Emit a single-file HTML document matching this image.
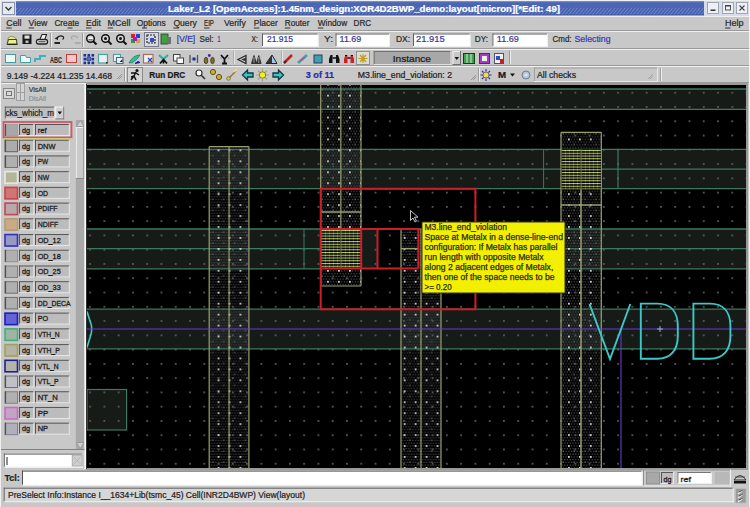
<!DOCTYPE html><html><head><meta charset="utf-8"><style>html,body{margin:0;padding:0;width:750px;height:507px;overflow:hidden;background:#c8c8c8}svg{display:block}text{font-family:"Liberation Sans",sans-serif;white-space:pre}</style></head><body>
<svg width="750" height="507" viewBox="0 0 750 507">
<defs>
<pattern id="hatch" patternUnits="userSpaceOnUse" width="2.6" height="6" patternTransform="rotate(40)"><rect width="2.6" height="6" fill="#4560b0"/><rect width="0.9" height="6" fill="#7088c8"/></pattern>
<pattern id="dots" patternUnits="userSpaceOnUse" x="89.2" y="91.8" width="14.27" height="14.27"><rect x="0" y="0" width="1.8" height="1.8" fill="#585858"/></pattern>
<pattern id="stg" patternUnits="userSpaceOnUse" x="217.6" y="116.6" width="10.95" height="10.95"><rect x="1.67" y="3.04" width="1.2" height="1.2" fill="#4e4e52"/><rect x="0.30" y="5.77" width="1.2" height="1.2" fill="#4e4e52"/><rect x="1.67" y="8.51" width="1.2" height="1.2" fill="#4e4e52"/><rect x="3.04" y="0.30" width="1.2" height="1.2" fill="#4e4e52"/><rect x="4.41" y="3.04" width="1.2" height="1.2" fill="#4e4e52"/><rect x="3.04" y="5.77" width="1.2" height="1.2" fill="#4e4e52"/><rect x="4.41" y="8.51" width="1.2" height="1.2" fill="#4e4e52"/><rect x="5.77" y="0.30" width="1.2" height="1.2" fill="#4e4e52"/><rect x="7.14" y="3.04" width="1.2" height="1.2" fill="#4e4e52"/><rect x="5.77" y="5.77" width="1.2" height="1.2" fill="#4e4e52"/><rect x="7.14" y="8.51" width="1.2" height="1.2" fill="#4e4e52"/><rect x="8.51" y="0.30" width="1.2" height="1.2" fill="#4e4e52"/><rect x="9.88" y="3.04" width="1.2" height="1.2" fill="#4e4e52"/><rect x="8.51" y="5.77" width="1.2" height="1.2" fill="#4e4e52"/><rect x="9.88" y="8.51" width="1.2" height="1.2" fill="#4e4e52"/><rect x="0" y="0" width="1.8" height="1.8" fill="#d8d8d8"/><rect x="5.475" y="5.475" width="1.3" height="1.3" fill="#6a6a6a"/></pattern>
<pattern id="hl" patternUnits="userSpaceOnUse" x="321" y="230" width="4" height="2.75"><rect x="0" y="0" width="4" height="1.1" fill="#b0c068"/><rect x="0" y="0" width="1" height="2.75" fill="#20261a"/><rect x="0" y="0" width="1" height="1.1" fill="#d0e090"/></pattern><pattern id="hl2" patternUnits="userSpaceOnUse" x="561" y="150" width="4" height="2.75"><rect x="0" y="0" width="4" height="1.1" fill="#b0c068"/><rect x="0" y="0" width="1" height="2.75" fill="#20261a"/><rect x="0" y="0" width="1" height="1.1" fill="#d0e090"/></pattern>
<clipPath id="cv"><rect x="87" y="85" width="659" height="383"/></clipPath>
</defs>
<rect x="0" y="0" width="750" height="507" fill="#c8c8c8" stroke="none" stroke-width="1" />
<line x1="0" y1="0.5" x2="750" y2="0.5" stroke="#f0f0f0" stroke-width="1" />
<line x1="0.5" y1="0" x2="0.5" y2="507" stroke="#f0f0f0" stroke-width="1" />
<line x1="749.5" y1="0" x2="749.5" y2="507" stroke="#f4f4f4" stroke-width="1" />
<rect x="1" y="1" width="748" height="15" fill="#d8dce8" stroke="none" stroke-width="1" />
<rect x="16" y="1.5" width="688" height="13.5" fill="url(#hatch)" stroke="none" stroke-width="1" />
<rect x="16" y="1.5" width="688" height="6.5" fill="#4a64b4" stroke="none" stroke-width="1" opacity="0.8"/>
<line x1="16" y1="1.8" x2="704" y2="1.8" stroke="#7890cc" stroke-width="0.6" />
<line x1="16" y1="15" x2="704" y2="15" stroke="#3a4e90" stroke-width="0.8" />
<rect x="2.5" y="2.5" width="12" height="12" fill="#e6e9f0" stroke="#8890aa" stroke-width="1" />
<path d="M5.5 7 L8.5 10 L11.5 7" fill="none" stroke="#333" stroke-width="1.3"/>
<text x="168" y="12" font-size="9.4" font-weight="bold" fill="#ffffff" textLength="392.0" lengthAdjust="spacingAndGlyphs" stroke="#ffffff" stroke-width="0.22">Laker_L2 [OpenAccess]:1.45nm_design:XOR4D2BWP_demo:layout[micron][*Edit: 49]</text>
<rect x="707.5" y="2.5" width="11" height="11" fill="#eef0f5" stroke="#a0a6b8" stroke-width="1" />
<rect x="722.5" y="2.5" width="11" height="11" fill="#eef0f5" stroke="#a0a6b8" stroke-width="1" />
<rect x="736.5" y="2.5" width="11" height="11" fill="#eef0f5" stroke="#a0a6b8" stroke-width="1" />
<rect x="710.5" y="9.5" width="5" height="1.5" fill="#333" stroke="none" stroke-width="1" />
<rect x="725.5" y="5.5" width="5" height="4.5" fill="none" stroke="#444" stroke-width="0.9" />
<rect x="725" y="5" width="6" height="1.5" fill="#444" stroke="none" stroke-width="1" />
<path d="M739.5 5.5 L744.5 10.5 M744.5 5.5 L739.5 10.5" stroke="#444" stroke-width="1.1"/>
<line x1="1" y1="16.5" x2="749" y2="16.5" stroke="#f0f0f0" stroke-width="1" />
<line x1="1" y1="30.5" x2="749" y2="30.5" stroke="#9a9a9a" stroke-width="1" />
<text x="6.3" y="25.8" font-size="8.6" font-weight="normal" fill="#2a2a2a" textLength="15.2" lengthAdjust="spacingAndGlyphs" stroke="#2a2a2a" stroke-width="0.22">Cell</text>
<line x1="6.3" y1="28" x2="11.8" y2="28" stroke="#333" stroke-width="1" />
<text x="28.6" y="25.8" font-size="8.6" font-weight="normal" fill="#2a2a2a" textLength="18.7" lengthAdjust="spacingAndGlyphs" stroke="#2a2a2a" stroke-width="0.22">View</text>
<line x1="28.6" y1="28" x2="34.1" y2="28" stroke="#333" stroke-width="1" />
<text x="54.4" y="25.8" font-size="8.6" font-weight="normal" fill="#2a2a2a" textLength="24.8" lengthAdjust="spacingAndGlyphs" stroke="#2a2a2a" stroke-width="0.22">Create</text>
<line x1="67.5" y1="28" x2="72.5" y2="28" stroke="#333" stroke-width="1" />
<text x="86" y="25.8" font-size="8.6" font-weight="normal" fill="#2a2a2a" textLength="14.8" lengthAdjust="spacingAndGlyphs" stroke="#2a2a2a" stroke-width="0.22">Edit</text>
<line x1="86" y1="28" x2="91.5" y2="28" stroke="#333" stroke-width="1" />
<text x="107.6" y="25.8" font-size="8.6" font-weight="normal" fill="#2a2a2a" textLength="22.8" lengthAdjust="spacingAndGlyphs" stroke="#2a2a2a" stroke-width="0.22">MCell</text>
<line x1="107.6" y1="28" x2="113.1" y2="28" stroke="#333" stroke-width="1" />
<text x="136.7" y="25.8" font-size="8.6" font-weight="normal" fill="#2a2a2a" textLength="29.1" lengthAdjust="spacingAndGlyphs" stroke="#2a2a2a" stroke-width="0.22">Options</text>
<line x1="142" y1="28" x2="147" y2="28" stroke="#333" stroke-width="1" />
<text x="173.4" y="25.8" font-size="8.6" font-weight="normal" fill="#2a2a2a" textLength="23.4" lengthAdjust="spacingAndGlyphs" stroke="#2a2a2a" stroke-width="0.22">Query</text>
<line x1="173.4" y1="28" x2="178.9" y2="28" stroke="#333" stroke-width="1" />
<text x="204" y="25.8" font-size="8.6" font-weight="normal" fill="#2a2a2a" textLength="10.0" lengthAdjust="spacingAndGlyphs" stroke="#2a2a2a" stroke-width="0.22">EIP</text>
<line x1="204" y1="28" x2="209.5" y2="28" stroke="#333" stroke-width="1" />
<text x="224" y="25.8" font-size="8.6" font-weight="normal" fill="#2a2a2a" textLength="21.8" lengthAdjust="spacingAndGlyphs" stroke="#2a2a2a" stroke-width="0.22">Verify</text>
<text x="253.8" y="25.8" font-size="8.6" font-weight="normal" fill="#2a2a2a" textLength="24.0" lengthAdjust="spacingAndGlyphs" stroke="#2a2a2a" stroke-width="0.22">Placer</text>
<line x1="253.8" y1="28" x2="259.3" y2="28" stroke="#333" stroke-width="1" />
<text x="284.8" y="25.8" font-size="8.6" font-weight="normal" fill="#2a2a2a" textLength="24.6" lengthAdjust="spacingAndGlyphs" stroke="#2a2a2a" stroke-width="0.22">Router</text>
<line x1="284.8" y1="28" x2="290.3" y2="28" stroke="#333" stroke-width="1" />
<text x="317.8" y="25.8" font-size="8.6" font-weight="normal" fill="#2a2a2a" textLength="29.4" lengthAdjust="spacingAndGlyphs" stroke="#2a2a2a" stroke-width="0.22">Window</text>
<line x1="317.8" y1="28" x2="323.3" y2="28" stroke="#333" stroke-width="1" />
<text x="353.6" y="25.8" font-size="8.6" font-weight="normal" fill="#2a2a2a" textLength="17.6" lengthAdjust="spacingAndGlyphs" stroke="#2a2a2a" stroke-width="0.22">DRC</text>
<text x="725" y="25.8" font-size="8.6" font-weight="normal" fill="#2a2a2a" textLength="18.5" lengthAdjust="spacingAndGlyphs" stroke="#2a2a2a" stroke-width="0.22">Help</text>
<line x1="725" y1="28" x2="730.5" y2="28" stroke="#333" stroke-width="1" />
<line x1="1" y1="31.5" x2="749" y2="31.5" stroke="#f0f0f0" stroke-width="1" />
<line x1="1" y1="48.5" x2="749" y2="48.5" stroke="#9a9a9a" stroke-width="1" />
<line x1="1" y1="49.5" x2="749" y2="49.5" stroke="#f0f0f0" stroke-width="1" />
<line x1="1" y1="65.5" x2="749" y2="65.5" stroke="#9a9a9a" stroke-width="1" />
<line x1="1" y1="66.5" x2="749" y2="66.5" stroke="#f0f0f0" stroke-width="1" />
<line x1="1" y1="82.5" x2="749" y2="82.5" stroke="#9a9a9a" stroke-width="1" />
<path d="M8 38 q3 -3 6 -1 l2 1.5 v5.5 h-8 z" fill="#e4ec90" stroke="#606030" stroke-width="0.6"/>
<path d="M7 44.5 l1.5 -5 h8 l0.5 5 z" fill="#e8f090" stroke="#303010" stroke-width="0.9"/><path d="M8 44.2 h9.5" stroke="#202010" stroke-width="1.2"/>
<rect x="22.5" y="34.5" width="9" height="9.5" fill="#1a1a1a" stroke="none" stroke-width="1" />
<rect x="24.5" y="35.5" width="5" height="3.2" fill="#e0e0e0" stroke="none" stroke-width="1" />
<rect x="25.5" y="40.5" width="3" height="2.5" fill="#c0c0c0" stroke="none" stroke-width="1" />
<path d="M40 39 l2 -4.5 h4.5 l-1.5 4.5" fill="#f0f0f0" stroke="#222" stroke-width="1.1"/><rect x="36.5" y="39.5" width="11" height="4.5" rx="2" fill="#e8e8e8" stroke="#222" stroke-width="1.3"/><path d="M38.5 41.8 h7" stroke="#222" stroke-width="0.9"/>
<line x1="50.5" y1="33" x2="50.5" y2="47" stroke="#999" stroke-width="1" />
<line x1="51.5" y1="33" x2="51.5" y2="47" stroke="#eee" stroke-width="1" />
<path d="M57 38 q3 -3.5 6 -1.5 q1.5 1.5 -0.5 3" fill="none" stroke="#222" stroke-width="1.2"/><path d="M54.5 38.5 l3.5 -2 v3.5 z" fill="#222"/><path d="M54.5 43 h5.5" stroke="#111" stroke-width="1.8"/>
<path d="M78 38 q-3 -3.5 -6 -1.5 q-1.5 1.5 0.5 3" fill="none" stroke="#a8a8a8" stroke-width="1.2"/><path d="M75 43 h5.5" stroke="#a8a8a8" stroke-width="1.8"/>
<line x1="82.5" y1="33" x2="82.5" y2="47" stroke="#999" stroke-width="1" />
<line x1="83.5" y1="33" x2="83.5" y2="47" stroke="#eee" stroke-width="1" />
<circle cx="90.5" cy="38.5" r="3.8" fill="#d8d8d8" stroke="#111" stroke-width="1.5"/><path d="M93 41 l3.5 3.5" stroke="#111" stroke-width="2"/>
<path d="M88.5 38.5 h4" stroke="#fff" stroke-width="1.6"/><path d="M88.5 39.8 h4" stroke="#222" stroke-width="0.8"/>
<circle cx="105.5" cy="38.5" r="3.8" fill="#d8d8d8" stroke="#111" stroke-width="1.5"/><path d="M108 41 l3.5 3.5" stroke="#111" stroke-width="2"/>
<circle cx="105.5" cy="38.5" r="1.5" fill="#111"/>
<circle cx="120.5" cy="38.5" r="3.8" fill="#d8d8d8" stroke="#111" stroke-width="1.5"/><path d="M123 41 l3.5 3.5" stroke="#111" stroke-width="2"/>
<circle cx="120.5" cy="38.5" r="1.5" fill="#111"/>
<rect x="131" y="34" width="4" height="4" fill="#e02020" stroke="none" stroke-width="1" />
<rect x="136" y="34" width="4" height="4" fill="#2040e0" stroke="none" stroke-width="1" />
<rect x="131" y="39" width="4" height="4" fill="#20a040" stroke="none" stroke-width="1" />
<rect x="136" y="39" width="4" height="4" fill="#e0a020" stroke="none" stroke-width="1" />
<rect x="133" y="37" width="4" height="4" fill="#a020c0" stroke="none" stroke-width="1" />
<rect x="144.5" y="32.5" width="14" height="14" fill="#d8d8e0" stroke="#7a7a8a" stroke-width="1" />
<path d="M147 35 h8 v8 h-8 z" fill="none" stroke="#202040" stroke-width="1.2" stroke-dasharray="2 1"/>
<rect x="150" y="38" width="4" height="4" fill="#3050c0" stroke="none" stroke-width="1" />
<rect x="161" y="34" width="7" height="10" fill="#40a040" stroke="#204020" stroke-width="0.8" />
<rect x="167" y="37" width="4" height="7" fill="#707070" stroke="none" stroke-width="1" />
<text x="176.8" y="42" font-size="8.8" font-weight="normal" fill="#3434a8" textLength="18.4" lengthAdjust="spacingAndGlyphs" stroke="#3434a8" stroke-width="0.22">[V/E]</text>
<text x="199.6" y="42" font-size="8.8" font-weight="normal" fill="#2a2a2a" textLength="14.0" lengthAdjust="spacingAndGlyphs" stroke="#2a2a2a" stroke-width="0.22">Sel:</text>
<text x="217.5" y="42" font-size="8.8" font-weight="normal" fill="#3434a8" textLength="3.0" lengthAdjust="spacingAndGlyphs" stroke="#3434a8" stroke-width="0.22">1</text>
<text x="251.4" y="42.2" font-size="8.6" font-weight="normal" fill="#2a2a2a" textLength="6.4" lengthAdjust="spacingAndGlyphs" stroke="#2a2a2a" stroke-width="0.22">X:</text>
<rect x="262" y="33.5" width="56.5" height="13.5" fill="#ffffff" stroke="none" stroke-width="1" />
<line x1="262" y1="34.0" x2="318.5" y2="34.0" stroke="#606060" stroke-width="1" />
<line x1="262.5" y1="33.5" x2="262.5" y2="47.0" stroke="#606060" stroke-width="1" />
<line x1="262" y1="46.5" x2="318.5" y2="46.5" stroke="#f0f0f0" stroke-width="1" />
<line x1="318.0" y1="33.5" x2="318.0" y2="47.0" stroke="#f0f0f0" stroke-width="1" />
<text x="266.9" y="42.4" font-size="8.6" font-weight="normal" fill="#3a3a96" textLength="26.1" lengthAdjust="spacingAndGlyphs" stroke="#3a3a96" stroke-width="0.22">21.915</text>
<text x="324" y="42.2" font-size="8.6" font-weight="normal" fill="#2a2a2a" textLength="9.0" lengthAdjust="spacingAndGlyphs" stroke="#2a2a2a" stroke-width="0.22">Y:</text>
<rect x="335.5" y="33.5" width="54.5" height="13.5" fill="#ffffff" stroke="none" stroke-width="1" />
<line x1="335.5" y1="34.0" x2="390.0" y2="34.0" stroke="#606060" stroke-width="1" />
<line x1="336.0" y1="33.5" x2="336.0" y2="47.0" stroke="#606060" stroke-width="1" />
<line x1="335.5" y1="46.5" x2="390.0" y2="46.5" stroke="#f0f0f0" stroke-width="1" />
<line x1="389.5" y1="33.5" x2="389.5" y2="47.0" stroke="#f0f0f0" stroke-width="1" />
<text x="339.6" y="42.4" font-size="8.6" font-weight="normal" fill="#3a3a96" textLength="21.6" lengthAdjust="spacingAndGlyphs" stroke="#3a3a96" stroke-width="0.22">11.69</text>
<text x="396" y="42.2" font-size="8.6" font-weight="normal" fill="#2a2a2a" textLength="14.0" lengthAdjust="spacingAndGlyphs" stroke="#2a2a2a" stroke-width="0.22">DX:</text>
<rect x="413" y="33.5" width="57.5" height="13.5" fill="#ffffff" stroke="none" stroke-width="1" />
<line x1="413" y1="34.0" x2="470.5" y2="34.0" stroke="#606060" stroke-width="1" />
<line x1="413.5" y1="33.5" x2="413.5" y2="47.0" stroke="#606060" stroke-width="1" />
<line x1="413" y1="46.5" x2="470.5" y2="46.5" stroke="#f0f0f0" stroke-width="1" />
<line x1="470.0" y1="33.5" x2="470.0" y2="47.0" stroke="#f0f0f0" stroke-width="1" />
<text x="416" y="42.4" font-size="8.6" font-weight="normal" fill="#3a3a96" textLength="28.6" lengthAdjust="spacingAndGlyphs" stroke="#3a3a96" stroke-width="0.22">21.915</text>
<text x="474.8" y="42.2" font-size="8.6" font-weight="normal" fill="#2a2a2a" textLength="13.2" lengthAdjust="spacingAndGlyphs" stroke="#2a2a2a" stroke-width="0.22">DY:</text>
<rect x="492.4" y="33.5" width="55.6" height="13.5" fill="#ffffff" stroke="none" stroke-width="1" />
<line x1="492.4" y1="34.0" x2="548.0" y2="34.0" stroke="#606060" stroke-width="1" />
<line x1="492.9" y1="33.5" x2="492.9" y2="47.0" stroke="#606060" stroke-width="1" />
<line x1="492.4" y1="46.5" x2="548.0" y2="46.5" stroke="#f0f0f0" stroke-width="1" />
<line x1="547.5" y1="33.5" x2="547.5" y2="47.0" stroke="#f0f0f0" stroke-width="1" />
<text x="496.8" y="42.4" font-size="8.6" font-weight="normal" fill="#3a3a96" textLength="22.0" lengthAdjust="spacingAndGlyphs" stroke="#3a3a96" stroke-width="0.22">11.69</text>
<text x="552.5" y="42.2" font-size="8.6" font-weight="normal" fill="#2a2a2a" textLength="19.1" lengthAdjust="spacingAndGlyphs" stroke="#2a2a2a" stroke-width="0.22">Cmd:</text>
<text x="574.5" y="42.2" font-size="8.6" font-weight="normal" fill="#3838b8" textLength="36.0" lengthAdjust="spacingAndGlyphs" stroke="#3838b8" stroke-width="0.22">Selecting</text>
<rect x="5.5" y="54.5" width="10" height="8" fill="#f0f8f8" stroke="#40a0a0" stroke-width="1" />
<path d="M20.5 55.5 h5 l1 2 h4 v5 h-10 z" fill="#f0f8f8" stroke="#40a0a0" stroke-width="1"/>
<path d="M35 62 v-3 h5 v-3 h6" fill="none" stroke="#40b0c0" stroke-width="2"/>
<text x="50" y="62.5" font-size="9" font-weight="bold" fill="#303030" textLength="12.0" lengthAdjust="spacingAndGlyphs" stroke="#303030" stroke-width="0.22">ABC</text>
<rect x="66.5" y="54.5" width="10" height="8" fill="#f0c8c8" stroke="#c04040" stroke-width="1" />
<line x1="80.5" y1="51" x2="80.5" y2="64" stroke="#b0b0b0" stroke-width="1" />
<line x1="81.5" y1="51" x2="81.5" y2="64" stroke="#e4e4e4" stroke-width="1" />
<rect x="83.5" y="54.0" width="2.6" height="2.6" fill="#1830a0" stroke="none" stroke-width="1" />
<rect x="87.5" y="54.0" width="2.6" height="2.6" fill="#1830a0" stroke="none" stroke-width="1" />
<rect x="91.5" y="54.0" width="2.6" height="2.6" fill="#1830a0" stroke="none" stroke-width="1" />
<rect x="83.5" y="57.8" width="2.6" height="2.6" fill="#1830a0" stroke="none" stroke-width="1" />
<rect x="91.5" y="57.8" width="2.6" height="2.6" fill="#1830a0" stroke="none" stroke-width="1" />
<rect x="83.5" y="61.6" width="2.6" height="2.6" fill="#1830a0" stroke="none" stroke-width="1" />
<rect x="87.5" y="61.6" width="2.6" height="2.6" fill="#1830a0" stroke="none" stroke-width="1" />
<rect x="91.5" y="61.6" width="2.6" height="2.6" fill="#1830a0" stroke="none" stroke-width="1" />
<circle cx="88.8" cy="58.9" r="2.2" fill="#5070c0" stroke="#203090" stroke-width="0.8"/>
<rect x="98.5" y="54.5" width="9" height="8.5" fill="#e8f0f0" stroke="#50a0a0" stroke-width="1.2" />
<rect x="106" y="62" width="1.5" height="1.5" fill="#222" stroke="none" stroke-width="1" />
<rect x="113.5" y="54.5" width="7" height="7" fill="#f0f4f4" stroke="#50a0a0" stroke-width="1.1" />
<rect x="116.5" y="57.5" width="6.5" height="6" fill="#f0f4f4" stroke="#40708a" stroke-width="1.1" />
<path d="M119.5 62 l3 -3 v3 z" fill="#102060"/>
<path d="M129 63 q4 -8 11 -8 q-2 4 -8 8 z" fill="#30c0a0" stroke="#207060" stroke-width="0.7"/><path d="M135 63.5 l3 -2 l2 1 z" fill="#1020a0" stroke="#1020a0" stroke-width="1"/><path d="M129.5 63.5 h4" stroke="#a0d050" stroke-width="1"/>
<rect x="143.5" y="54.5" width="9.5" height="8.5" fill="#f4f0f0" stroke="#a07060" stroke-width="1.2" />
<path d="M148 58 l4 4 M152 58 l-4 4" stroke="#2040a0" stroke-width="1.2"/>
<path d="M159 55 l4.5 4 l4.5 -4" fill="none" stroke="#30b0a0" stroke-width="2.2"/><path d="M163.5 59 v4.5 M160 63.5 l3.5 -4 l3.5 4" fill="none" stroke="#111" stroke-width="1.8"/>
<rect x="173.5" y="54.5" width="6.5" height="6.5" fill="#f8f8f8" stroke="#444" stroke-width="1" />
<rect x="177" y="58" width="6.5" height="5.5" fill="#f8f8f8" stroke="#444" stroke-width="1" />
<path d="M190 55 v8 M197.5 55 v8" stroke="#555" stroke-width="1.3"/><path d="M191 59 h6" stroke="#a0a0c0" stroke-width="1"/>
<rect x="192.5" y="57.5" width="3" height="3" fill="#1830a0" stroke="none" stroke-width="1" />
<ellipse cx="206" cy="60.5" rx="1.8" ry="3.2" fill="#807030" stroke="#302810" stroke-width="0.7"/><ellipse cx="212.5" cy="60.5" rx="1.8" ry="3.2" fill="#807030" stroke="#302810" stroke-width="0.7"/><circle cx="209.3" cy="55.5" r="1.4" fill="#5020a0"/>
<path d="M221 55 l3.5 4 l3.5 -4 M224.5 59 v4.5 M222 63.5 h5" fill="none" stroke="#111" stroke-width="1.8"/><path d="M220.5 58 h1.5 M228 58 h1.5" stroke="#60a060" stroke-width="1"/>
<line x1="233.5" y1="51" x2="233.5" y2="64" stroke="#b0b0b0" stroke-width="1" />
<line x1="234.5" y1="51" x2="234.5" y2="64" stroke="#e4e4e4" stroke-width="1" />
<path d="M238 59.5 l8 -4 v8 z" fill="#d8d8d8" stroke="#222" stroke-width="1.2"/><path d="M241 59.5 l5 -2 v4 z" fill="#333"/>
<path d="M251.5 63.5 l2.5 -8 l2.5 8 z M256.5 63.5 l2.3 -8 l2.3 8 z" fill="#333" stroke="#222" stroke-width="0.8"/><path d="M254 57 v6 M258.8 57 v6" stroke="#ddd" stroke-width="0.6"/>
<path d="M266 63.5 l6 -8.5 l5 8.5 z" fill="#a8c8e8" stroke="#222" stroke-width="1"/><path d="M266 63.5 l6 -8.5 v8.5 z" fill="#333"/>
<line x1="281.5" y1="51" x2="281.5" y2="64" stroke="#b0b0b0" stroke-width="1" />
<line x1="282.5" y1="51" x2="282.5" y2="64" stroke="#e4e4e4" stroke-width="1" />
<path d="M284 63 l8 -8" stroke="#c02020" stroke-width="2.5"/><path d="M284 63 l2 -2" stroke="#303030" stroke-width="2"/>
<path d="M298 63 l9 -8" stroke="#30b0b0" stroke-width="3"/><path d="M300 61 l5 -4" stroke="#e04080" stroke-width="1.5"/>
<rect x="314" y="55" width="8" height="8" fill="#40a0b0" stroke="#204060" stroke-width="1" />
<path d="M329 63 v-4 l1.5 -4 h2 v8 z M339.5 63 v-4 l-1.5 -4 h-2 v8 z" fill="#111"/><path d="M332.5 58 h4" stroke="#111" stroke-width="1.5"/>
<path d="M344 63 v-4 l1.5 -4 h2 v8 z M354 63 v-4 l-1.5 -4 h-2 v8 z" fill="#d02020"/><path d="M347.5 58 h3" stroke="#111" stroke-width="1.5"/><path d="M345 55.5 h2 M351 55.5 h2" stroke="#111" stroke-width="1"/>
<rect x="356.5" y="51.5" width="13" height="13" fill="#dcdcd4" stroke="#909090" stroke-width="1" />
<path d="M363 54 v9 M358.5 58.5 h9 M360 55 l6 7 M366 55 l-6 7" stroke="#c0a020" stroke-width="1.2"/>
<rect x="373.7" y="51" width="77.7" height="14" fill="#a8a8a8" stroke="none" stroke-width="1" />
<line x1="373.7" y1="51.5" x2="451.4" y2="51.5" stroke="#707070" stroke-width="1" />
<line x1="374.2" y1="51" x2="374.2" y2="65" stroke="#707070" stroke-width="1" />
<line x1="373.7" y1="64.5" x2="451.4" y2="64.5" stroke="#e0e0e0" stroke-width="1" />
<line x1="450.9" y1="51" x2="450.9" y2="65" stroke="#e0e0e0" stroke-width="1" />
<text x="392.8" y="62" font-size="9.4" font-weight="normal" fill="#1a1a1a" textLength="38.2" lengthAdjust="spacingAndGlyphs" stroke="#1a1a1a" stroke-width="0.22">Instance</text>
<rect x="452.5" y="51" width="8.5" height="14" fill="#c8c8c8" stroke="none" stroke-width="1" />
<line x1="452.5" y1="51.5" x2="461.0" y2="51.5" stroke="#f0f0f0" stroke-width="1" />
<line x1="453.0" y1="51" x2="453.0" y2="65" stroke="#f0f0f0" stroke-width="1" />
<line x1="452.5" y1="64.5" x2="461.0" y2="64.5" stroke="#707070" stroke-width="1" />
<line x1="460.5" y1="51" x2="460.5" y2="65" stroke="#707070" stroke-width="1" />
<path d="M454.5 57 h4.5 l-2.25 3 z" fill="#111"/>
<rect x="463.5" y="53.5" width="11" height="10" fill="#40a050" stroke="#104010" stroke-width="1" />
<line x1="467" y1="54" x2="467" y2="63" stroke="#e0e0e0" stroke-width="1" />
<line x1="471" y1="54" x2="471" y2="63" stroke="#e0e0e0" stroke-width="1" />
<rect x="479.5" y="53.5" width="10" height="10" fill="#a040c0" stroke="#3030a0" stroke-width="1" />
<rect x="482" y="56" width="5" height="5" fill="#f0f0f0" stroke="none" stroke-width="1" />
<rect x="494.5" y="53.5" width="9" height="10" fill="#f0f0f0" stroke="#505080" stroke-width="1" />
<rect x="496" y="56" width="4" height="4" fill="#3050c0" stroke="none" stroke-width="1" />
<rect x="500" y="59" width="4" height="5" fill="#c02020" stroke="none" stroke-width="1" />
<line x1="509.5" y1="51" x2="509.5" y2="64" stroke="#999" stroke-width="1" />
<line x1="510.5" y1="51" x2="510.5" y2="64" stroke="#eee" stroke-width="1" />
<text x="6.7" y="78.5" font-size="8.6" font-weight="normal" fill="#1e1e1e" textLength="105.3" lengthAdjust="spacingAndGlyphs" stroke="#1e1e1e" stroke-width="0.22">9.149 -4.224 41.235 14.468</text>
<path d="M117 79 l5 -5 M119 79 l3 -3" stroke="#888" stroke-width="0.8"/>
<line x1="124.5" y1="68" x2="124.5" y2="81" stroke="#999" stroke-width="1" />
<line x1="125.5" y1="68" x2="125.5" y2="81" stroke="#eee" stroke-width="1" />
<rect x="127.5" y="67.5" width="15" height="15" fill="#d4d4d4" stroke="#8a8a8a" stroke-width="1" />
<circle cx="137" cy="70.5" r="1.6" fill="#111"/><path d="M136 72 l-2 4 l-3 1 M134 76 l2 4 M134 76 l-3 4 M136 73 l3 2 M135 73 l-4 0" stroke="#111" stroke-width="1.5" fill="none"/>
<text x="149.3" y="78" font-size="8.8" font-weight="bold" fill="#1a1a1a" textLength="36.0" lengthAdjust="spacingAndGlyphs" stroke="#1a1a1a" stroke-width="0.22">Run DRC</text>
<circle cx="199" cy="73" r="3" fill="#fff" stroke="#333" stroke-width="1.2"/><path d="M201 75 l4 4" stroke="#333" stroke-width="1.6"/>
<circle cx="213" cy="72" r="2.6" fill="#d0b030" stroke="#605010" stroke-width="1"/><circle cx="219" cy="77" r="2.6" fill="#d0b030" stroke="#605010" stroke-width="1"/>
<path d="M228 79 l8 -8" stroke="#a07030" stroke-width="1.4"/><circle cx="228.5" cy="78.5" r="1.8" fill="#d0d040" stroke="#505010" stroke-width="0.6"/><path d="M234 72 l3 -3" stroke="#f0e060" stroke-width="1.6"/>
<path d="M242.5 75 l5 -5 v3 h5.5 v4 h-5.5 v3 z" fill="#40c0c8" stroke="#0c3a40" stroke-width="1.3"/>
<path d="M262.5 68.5 v3 M262.5 78.5 v3 M256 75 h3 M266 75 h3 M258 70.5 l2 2 M265 77.5 l2 2 M258 79.5 l2 -2 M265 72.5 l2 -2" stroke="#a0a0a0" stroke-width="1.2"/><circle cx="262.5" cy="75" r="3.2" fill="#f0f020" stroke="#707000" stroke-width="0.8"/>
<path d="M283.5 75 l-5 -5 v3 h-5.5 v4 h5.5 v3 z" fill="#40c0c8" stroke="#0c3a40" stroke-width="1.3"/>
<text x="305.8" y="77.7" font-size="8.8" font-weight="bold" fill="#2a2ab0" textLength="28.2" lengthAdjust="spacingAndGlyphs" stroke="#2a2ab0" stroke-width="0.22">3 of 11</text>
<text x="357.8" y="77.7" font-size="8.6" font-weight="normal" fill="#1e1e1e" textLength="94.2" lengthAdjust="spacingAndGlyphs" stroke="#1e1e1e" stroke-width="0.22">M3.line_end_violation: 2</text>
<path d="M471 80 l5 -5 M473 80 l3 -3" stroke="#888" stroke-width="0.8"/>
<line x1="478.5" y1="68" x2="478.5" y2="81" stroke="#999" stroke-width="1" />
<line x1="479.5" y1="68" x2="479.5" y2="81" stroke="#eee" stroke-width="1" />
<circle cx="486" cy="75" r="3" fill="#f0e030" stroke="#6040a0" stroke-width="0.8"/><path d="M486 69 v2.5 M486 78.5 v2.5 M480.5 75 h2.5 M489 75 h2.5 M482 71 l1.5 1.5 M488.5 77.5 l1.5 1.5 M482 79 l1.5 -1.5 M488.5 72.5 l1.5 -1.5" stroke="#3030a0" stroke-width="1.1"/>
<text x="497.9" y="78" font-size="8.8" font-weight="bold" fill="#1a1a1a" textLength="8.1" lengthAdjust="spacingAndGlyphs" stroke="#1a1a1a" stroke-width="0.22">M</text>
<path d="M510 73.5 h5 l-2.5 3 z" fill="#111"/>
<circle cx="526" cy="75" r="4" fill="#b0c8d8" stroke="#708090" stroke-width="1"/><circle cx="526" cy="75" r="1.5" fill="#e0e8f0"/>
<rect x="534" y="67.5" width="124" height="14.5" fill="#c8c8c8" stroke="none" stroke-width="1" />
<line x1="534" y1="68.0" x2="658" y2="68.0" stroke="#a0a0a0" stroke-width="1" />
<line x1="534.5" y1="67.5" x2="534.5" y2="82.0" stroke="#a0a0a0" stroke-width="1" />
<line x1="534" y1="81.5" x2="658" y2="81.5" stroke="#e8e8e8" stroke-width="1" />
<line x1="657.5" y1="67.5" x2="657.5" y2="82.0" stroke="#e8e8e8" stroke-width="1" />
<text x="537" y="78" font-size="8.6" font-weight="normal" fill="#1e1e1e" textLength="39.0" lengthAdjust="spacingAndGlyphs" stroke="#1e1e1e" stroke-width="0.22">All checks</text>
<path d="M648 79 l5 -5 M650 79 l3 -3" stroke="#999" stroke-width="0.8"/>
<line x1="660.5" y1="68" x2="660.5" y2="81" stroke="#a0a0a0" stroke-width="1" />
<line x1="661.5" y1="68" x2="661.5" y2="81" stroke="#eee" stroke-width="1" />
<line x1="1" y1="83.5" x2="85" y2="83.5" stroke="#f0f0f0" stroke-width="1" />
<rect x="3.5" y="88.5" width="11" height="10" fill="#d8d8d8" stroke="#888" stroke-width="1" />
<rect x="6.5" y="91.5" width="5" height="4" fill="none" stroke="#777" stroke-width="1" />
<rect x="16.5" y="83.5" width="8" height="17" fill="#d4d4d4" stroke="#a0a0a0" stroke-width="1" />
<line x1="20.5" y1="84" x2="20.5" y2="100" stroke="#a0a0a0" stroke-width="1" />
<line x1="17" y1="92.5" x2="24" y2="92.5" stroke="#a0a0a0" stroke-width="1" />
<text x="28.7" y="92" font-size="6.8" font-weight="normal" fill="#333" textLength="17.3" lengthAdjust="spacingAndGlyphs" stroke="#333" stroke-width="0.15">VisAll</text>
<text x="28.7" y="101" font-size="6.8" font-weight="normal" fill="#8a8a8a" textLength="17.3" lengthAdjust="spacingAndGlyphs" stroke="#8a8a8a" stroke-width="0.1">DisAll</text>
<rect x="4.8" y="106.6" width="50" height="12.8" fill="#bdbdbd" stroke="none" stroke-width="1" />
<line x1="4.8" y1="107.1" x2="54.8" y2="107.1" stroke="#606060" stroke-width="1" />
<line x1="5.3" y1="106.6" x2="5.3" y2="119.39999999999999" stroke="#606060" stroke-width="1" />
<line x1="4.8" y1="118.89999999999999" x2="54.8" y2="118.89999999999999" stroke="#e8e8e8" stroke-width="1" />
<line x1="54.3" y1="106.6" x2="54.3" y2="119.39999999999999" stroke="#e8e8e8" stroke-width="1" />
<text x="5.5" y="116.3" font-size="8.2" font-weight="normal" fill="#1e1e1e" textLength="48.5" lengthAdjust="spacingAndGlyphs" stroke="#1e1e1e" stroke-width="0.22">cks_which_m</text>
<rect x="55.2" y="106.6" width="9" height="12.8" fill="#d0d0d0" stroke="none" stroke-width="1" />
<line x1="55.2" y1="107.1" x2="64.2" y2="107.1" stroke="#f4f4f4" stroke-width="1" />
<line x1="55.7" y1="106.6" x2="55.7" y2="119.39999999999999" stroke="#f4f4f4" stroke-width="1" />
<line x1="55.2" y1="118.89999999999999" x2="64.2" y2="118.89999999999999" stroke="#808080" stroke-width="1" />
<line x1="63.7" y1="106.6" x2="63.7" y2="119.39999999999999" stroke="#808080" stroke-width="1" />
<path d="M57.5 111.5 h4.5 l-2.25 3 z" fill="#111"/>
<rect x="75.8" y="120" width="9" height="330" fill="#a9a9a9" stroke="none" stroke-width="1" />
<rect x="75.8" y="127" width="8.5" height="52" fill="#cacaca" stroke="none" stroke-width="1" />
<line x1="75.8" y1="127.5" x2="84.3" y2="127.5" stroke="#f0f0f0" stroke-width="1" />
<line x1="76.3" y1="127" x2="76.3" y2="179" stroke="#f0f0f0" stroke-width="1" />
<line x1="75.8" y1="178.5" x2="84.3" y2="178.5" stroke="#8a8a8a" stroke-width="1" />
<line x1="83.8" y1="127" x2="83.8" y2="179" stroke="#8a8a8a" stroke-width="1" />
<path d="M76.5 126.5 l3.75 -6 l3.75 6 z" fill="#d0d0d0" stroke="#909090" stroke-width="0.8"/>
<path d="M76.5 442.5 l3.75 6 l3.75 -6 z" fill="#d0d0d0" stroke="#909090" stroke-width="0.8"/>
<line x1="85" y1="83" x2="85" y2="469" stroke="#f4f4f4" stroke-width="1" />
<rect x="5" y="124.5" width="12.5" height="11.5" fill="#a8a8a8" stroke="#a0a0a0" stroke-width="1" />
<line x1="5.5" y1="124.0" x2="5.5" y2="136.0" stroke="#505050" stroke-width="1.2" />
<rect x="19" y="124.0" width="15.3" height="12" fill="#bcbcbc" stroke="none" stroke-width="1" />
<line x1="19" y1="124.5" x2="34.3" y2="124.5" stroke="#555555" stroke-width="1" />
<line x1="19.5" y1="124.0" x2="19.5" y2="136.0" stroke="#555555" stroke-width="1" />
<line x1="19" y1="135.5" x2="34.3" y2="135.5" stroke="#e8e8e8" stroke-width="1" />
<line x1="33.8" y1="124.0" x2="33.8" y2="136.0" stroke="#e8e8e8" stroke-width="1" />
<text x="22" y="132.8" font-size="7.8" font-weight="normal" fill="#1e1e1e" textLength="8.1" lengthAdjust="spacingAndGlyphs" stroke="#1e1e1e" stroke-width="0.3">dg</text>
<rect x="35" y="124.0" width="34.8" height="12" fill="#bcbcbc" stroke="none" stroke-width="1" />
<line x1="35" y1="124.5" x2="69.8" y2="124.5" stroke="#555555" stroke-width="1" />
<line x1="35.5" y1="124.0" x2="35.5" y2="136.0" stroke="#555555" stroke-width="1" />
<line x1="35" y1="135.5" x2="69.8" y2="135.5" stroke="#e8e8e8" stroke-width="1" />
<line x1="69.3" y1="124.0" x2="69.3" y2="136.0" stroke="#e8e8e8" stroke-width="1" />
<text x="37.7" y="132.8" font-size="7.8" font-weight="normal" fill="#1e1e1e" textLength="8.8" lengthAdjust="spacingAndGlyphs" stroke="#1e1e1e" stroke-width="0.3">ref</text>
<rect x="5" y="140.22" width="12.5" height="11.5" fill="#acacac" stroke="#606060" stroke-width="1" />
<line x1="5.5" y1="139.72" x2="5.5" y2="151.72" stroke="#505050" stroke-width="1.2" />
<rect x="19" y="139.72" width="15.3" height="12" fill="#bcbcbc" stroke="none" stroke-width="1" />
<line x1="19" y1="140.22" x2="34.3" y2="140.22" stroke="#555555" stroke-width="1" />
<line x1="19.5" y1="139.72" x2="19.5" y2="151.72" stroke="#555555" stroke-width="1" />
<line x1="19" y1="151.22" x2="34.3" y2="151.22" stroke="#e8e8e8" stroke-width="1" />
<line x1="33.8" y1="139.72" x2="33.8" y2="151.72" stroke="#e8e8e8" stroke-width="1" />
<text x="22" y="148.52" font-size="7.8" font-weight="normal" fill="#1e1e1e" textLength="8.1" lengthAdjust="spacingAndGlyphs" stroke="#1e1e1e" stroke-width="0.3">dg</text>
<rect x="35" y="139.72" width="34.8" height="12" fill="#bcbcbc" stroke="none" stroke-width="1" />
<line x1="35" y1="140.22" x2="69.8" y2="140.22" stroke="#555555" stroke-width="1" />
<line x1="35.5" y1="139.72" x2="35.5" y2="151.72" stroke="#555555" stroke-width="1" />
<line x1="35" y1="151.22" x2="69.8" y2="151.22" stroke="#e8e8e8" stroke-width="1" />
<line x1="69.3" y1="139.72" x2="69.3" y2="151.72" stroke="#e8e8e8" stroke-width="1" />
<text x="37.7" y="148.52" font-size="7.8" font-weight="normal" fill="#1e1e1e" textLength="17.7" lengthAdjust="spacingAndGlyphs" stroke="#1e1e1e" stroke-width="0.3">DNW</text>
<rect x="5" y="155.94" width="12.5" height="11.5" fill="#b0b0b0" stroke="#707070" stroke-width="1" />
<line x1="5.5" y1="155.44" x2="5.5" y2="167.44" stroke="#505050" stroke-width="1.2" />
<rect x="19" y="155.44" width="15.3" height="12" fill="#bcbcbc" stroke="none" stroke-width="1" />
<line x1="19" y1="155.94" x2="34.3" y2="155.94" stroke="#555555" stroke-width="1" />
<line x1="19.5" y1="155.44" x2="19.5" y2="167.44" stroke="#555555" stroke-width="1" />
<line x1="19" y1="166.94" x2="34.3" y2="166.94" stroke="#e8e8e8" stroke-width="1" />
<line x1="33.8" y1="155.44" x2="33.8" y2="167.44" stroke="#e8e8e8" stroke-width="1" />
<text x="22" y="164.24" font-size="7.8" font-weight="normal" fill="#1e1e1e" textLength="8.1" lengthAdjust="spacingAndGlyphs" stroke="#1e1e1e" stroke-width="0.3">dg</text>
<rect x="35" y="155.44" width="34.8" height="12" fill="#bcbcbc" stroke="none" stroke-width="1" />
<line x1="35" y1="155.94" x2="69.8" y2="155.94" stroke="#555555" stroke-width="1" />
<line x1="35.5" y1="155.44" x2="35.5" y2="167.44" stroke="#555555" stroke-width="1" />
<line x1="35" y1="166.94" x2="69.8" y2="166.94" stroke="#e8e8e8" stroke-width="1" />
<line x1="69.3" y1="155.44" x2="69.3" y2="167.44" stroke="#e8e8e8" stroke-width="1" />
<text x="37.7" y="164.24" font-size="7.8" font-weight="normal" fill="#1e1e1e" textLength="10.4" lengthAdjust="spacingAndGlyphs" stroke="#1e1e1e" stroke-width="0.3">PW</text>
<rect x="5" y="171.66" width="12.5" height="11.5" fill="#b4b498" stroke="#e8e8e0" stroke-width="1.6" />
<rect x="19" y="171.16" width="15.3" height="12" fill="#bcbcbc" stroke="none" stroke-width="1" />
<line x1="19" y1="171.66" x2="34.3" y2="171.66" stroke="#555555" stroke-width="1" />
<line x1="19.5" y1="171.16" x2="19.5" y2="183.16" stroke="#555555" stroke-width="1" />
<line x1="19" y1="182.66" x2="34.3" y2="182.66" stroke="#e8e8e8" stroke-width="1" />
<line x1="33.8" y1="171.16" x2="33.8" y2="183.16" stroke="#e8e8e8" stroke-width="1" />
<text x="22" y="179.96" font-size="7.8" font-weight="normal" fill="#1e1e1e" textLength="8.1" lengthAdjust="spacingAndGlyphs" stroke="#1e1e1e" stroke-width="0.3">dg</text>
<rect x="35" y="171.16" width="34.8" height="12" fill="#bcbcbc" stroke="none" stroke-width="1" />
<line x1="35" y1="171.66" x2="69.8" y2="171.66" stroke="#555555" stroke-width="1" />
<line x1="35.5" y1="171.16" x2="35.5" y2="183.16" stroke="#555555" stroke-width="1" />
<line x1="35" y1="182.66" x2="69.8" y2="182.66" stroke="#e8e8e8" stroke-width="1" />
<line x1="69.3" y1="171.16" x2="69.3" y2="183.16" stroke="#e8e8e8" stroke-width="1" />
<text x="37.7" y="179.96" font-size="7.8" font-weight="normal" fill="#1e1e1e" textLength="11.4" lengthAdjust="spacingAndGlyphs" stroke="#1e1e1e" stroke-width="0.3">NW</text>
<rect x="5" y="187.38" width="12.5" height="11.5" fill="#d07474" stroke="#c04848" stroke-width="1.6" />
<rect x="19" y="186.88" width="15.3" height="12" fill="#bcbcbc" stroke="none" stroke-width="1" />
<line x1="19" y1="187.38" x2="34.3" y2="187.38" stroke="#555555" stroke-width="1" />
<line x1="19.5" y1="186.88" x2="19.5" y2="198.88" stroke="#555555" stroke-width="1" />
<line x1="19" y1="198.38" x2="34.3" y2="198.38" stroke="#e8e8e8" stroke-width="1" />
<line x1="33.8" y1="186.88" x2="33.8" y2="198.88" stroke="#e8e8e8" stroke-width="1" />
<text x="22" y="195.68" font-size="7.8" font-weight="normal" fill="#1e1e1e" textLength="8.1" lengthAdjust="spacingAndGlyphs" stroke="#1e1e1e" stroke-width="0.3">dg</text>
<rect x="35" y="186.88" width="34.8" height="12" fill="#bcbcbc" stroke="none" stroke-width="1" />
<line x1="35" y1="187.38" x2="69.8" y2="187.38" stroke="#555555" stroke-width="1" />
<line x1="35.5" y1="186.88" x2="35.5" y2="198.88" stroke="#555555" stroke-width="1" />
<line x1="35" y1="198.38" x2="69.8" y2="198.38" stroke="#e8e8e8" stroke-width="1" />
<line x1="69.3" y1="186.88" x2="69.3" y2="198.88" stroke="#e8e8e8" stroke-width="1" />
<text x="37.7" y="195.68" font-size="7.8" font-weight="normal" fill="#1e1e1e" textLength="10.4" lengthAdjust="spacingAndGlyphs" stroke="#1e1e1e" stroke-width="0.3">OD</text>
<rect x="5" y="203.10000000000002" width="12.5" height="11.5" fill="#b8a8a8" stroke="#c04858" stroke-width="1.6" />
<rect x="19" y="202.60000000000002" width="15.3" height="12" fill="#bcbcbc" stroke="none" stroke-width="1" />
<line x1="19" y1="203.10000000000002" x2="34.3" y2="203.10000000000002" stroke="#555555" stroke-width="1" />
<line x1="19.5" y1="202.60000000000002" x2="19.5" y2="214.60000000000002" stroke="#555555" stroke-width="1" />
<line x1="19" y1="214.10000000000002" x2="34.3" y2="214.10000000000002" stroke="#e8e8e8" stroke-width="1" />
<line x1="33.8" y1="202.60000000000002" x2="33.8" y2="214.60000000000002" stroke="#e8e8e8" stroke-width="1" />
<text x="22" y="211.40000000000003" font-size="7.8" font-weight="normal" fill="#1e1e1e" textLength="8.1" lengthAdjust="spacingAndGlyphs" stroke="#1e1e1e" stroke-width="0.3">dg</text>
<rect x="35" y="202.60000000000002" width="34.8" height="12" fill="#bcbcbc" stroke="none" stroke-width="1" />
<line x1="35" y1="203.10000000000002" x2="69.8" y2="203.10000000000002" stroke="#555555" stroke-width="1" />
<line x1="35.5" y1="202.60000000000002" x2="35.5" y2="214.60000000000002" stroke="#555555" stroke-width="1" />
<line x1="35" y1="214.10000000000002" x2="69.8" y2="214.10000000000002" stroke="#e8e8e8" stroke-width="1" />
<line x1="69.3" y1="202.60000000000002" x2="69.3" y2="214.60000000000002" stroke="#e8e8e8" stroke-width="1" />
<text x="37.7" y="211.40000000000003" font-size="7.8" font-weight="normal" fill="#1e1e1e" textLength="19.9" lengthAdjust="spacingAndGlyphs" stroke="#1e1e1e" stroke-width="0.3">PDIFF</text>
<rect x="5" y="218.82" width="12.5" height="11.5" fill="#c8aa84" stroke="#b89a74" stroke-width="1.6" />
<rect x="19" y="218.32" width="15.3" height="12" fill="#bcbcbc" stroke="none" stroke-width="1" />
<line x1="19" y1="218.82" x2="34.3" y2="218.82" stroke="#555555" stroke-width="1" />
<line x1="19.5" y1="218.32" x2="19.5" y2="230.32" stroke="#555555" stroke-width="1" />
<line x1="19" y1="229.82" x2="34.3" y2="229.82" stroke="#e8e8e8" stroke-width="1" />
<line x1="33.8" y1="218.32" x2="33.8" y2="230.32" stroke="#e8e8e8" stroke-width="1" />
<text x="22" y="227.12" font-size="7.8" font-weight="normal" fill="#1e1e1e" textLength="8.1" lengthAdjust="spacingAndGlyphs" stroke="#1e1e1e" stroke-width="0.3">dg</text>
<rect x="35" y="218.32" width="34.8" height="12" fill="#bcbcbc" stroke="none" stroke-width="1" />
<line x1="35" y1="218.82" x2="69.8" y2="218.82" stroke="#555555" stroke-width="1" />
<line x1="35.5" y1="218.32" x2="35.5" y2="230.32" stroke="#555555" stroke-width="1" />
<line x1="35" y1="229.82" x2="69.8" y2="229.82" stroke="#e8e8e8" stroke-width="1" />
<line x1="69.3" y1="218.32" x2="69.3" y2="230.32" stroke="#e8e8e8" stroke-width="1" />
<text x="37.7" y="227.12" font-size="7.8" font-weight="normal" fill="#1e1e1e" textLength="20.5" lengthAdjust="spacingAndGlyphs" stroke="#1e1e1e" stroke-width="0.3">NDIFF</text>
<rect x="5" y="234.54000000000002" width="12.5" height="11.5" fill="#9898c4" stroke="#3030c0" stroke-width="1.6" />
<rect x="19" y="234.04000000000002" width="15.3" height="12" fill="#bcbcbc" stroke="none" stroke-width="1" />
<line x1="19" y1="234.54000000000002" x2="34.3" y2="234.54000000000002" stroke="#555555" stroke-width="1" />
<line x1="19.5" y1="234.04000000000002" x2="19.5" y2="246.04000000000002" stroke="#555555" stroke-width="1" />
<line x1="19" y1="245.54000000000002" x2="34.3" y2="245.54000000000002" stroke="#e8e8e8" stroke-width="1" />
<line x1="33.8" y1="234.04000000000002" x2="33.8" y2="246.04000000000002" stroke="#e8e8e8" stroke-width="1" />
<text x="22" y="242.84000000000003" font-size="7.8" font-weight="normal" fill="#1e1e1e" textLength="8.1" lengthAdjust="spacingAndGlyphs" stroke="#1e1e1e" stroke-width="0.3">dg</text>
<rect x="35" y="234.04000000000002" width="34.8" height="12" fill="#bcbcbc" stroke="none" stroke-width="1" />
<line x1="35" y1="234.54000000000002" x2="69.8" y2="234.54000000000002" stroke="#555555" stroke-width="1" />
<line x1="35.5" y1="234.04000000000002" x2="35.5" y2="246.04000000000002" stroke="#555555" stroke-width="1" />
<line x1="35" y1="245.54000000000002" x2="69.8" y2="245.54000000000002" stroke="#e8e8e8" stroke-width="1" />
<line x1="69.3" y1="234.04000000000002" x2="69.3" y2="246.04000000000002" stroke="#e8e8e8" stroke-width="1" />
<text x="37.7" y="242.84000000000003" font-size="7.8" font-weight="normal" fill="#1e1e1e" textLength="23.0" lengthAdjust="spacingAndGlyphs" stroke="#1e1e1e" stroke-width="0.3">OD_12</text>
<rect x="5" y="250.26" width="12.5" height="11.5" fill="#b0b0b0" stroke="#909090" stroke-width="1" />
<line x1="5.5" y1="249.76" x2="5.5" y2="261.76" stroke="#505050" stroke-width="1.2" />
<rect x="19" y="249.76" width="15.3" height="12" fill="#bcbcbc" stroke="none" stroke-width="1" />
<line x1="19" y1="250.26" x2="34.3" y2="250.26" stroke="#555555" stroke-width="1" />
<line x1="19.5" y1="249.76" x2="19.5" y2="261.76" stroke="#555555" stroke-width="1" />
<line x1="19" y1="261.26" x2="34.3" y2="261.26" stroke="#e8e8e8" stroke-width="1" />
<line x1="33.8" y1="249.76" x2="33.8" y2="261.76" stroke="#e8e8e8" stroke-width="1" />
<text x="22" y="258.56" font-size="7.8" font-weight="normal" fill="#1e1e1e" textLength="8.1" lengthAdjust="spacingAndGlyphs" stroke="#1e1e1e" stroke-width="0.3">dg</text>
<rect x="35" y="249.76" width="34.8" height="12" fill="#bcbcbc" stroke="none" stroke-width="1" />
<line x1="35" y1="250.26" x2="69.8" y2="250.26" stroke="#555555" stroke-width="1" />
<line x1="35.5" y1="249.76" x2="35.5" y2="261.76" stroke="#555555" stroke-width="1" />
<line x1="35" y1="261.26" x2="69.8" y2="261.26" stroke="#e8e8e8" stroke-width="1" />
<line x1="69.3" y1="249.76" x2="69.3" y2="261.76" stroke="#e8e8e8" stroke-width="1" />
<text x="37.7" y="258.56" font-size="7.8" font-weight="normal" fill="#1e1e1e" textLength="23.0" lengthAdjust="spacingAndGlyphs" stroke="#1e1e1e" stroke-width="0.3">OD_18</text>
<rect x="5" y="265.98" width="12.5" height="11.5" fill="#b0b0b0" stroke="#808080" stroke-width="1" />
<line x1="5.5" y1="265.48" x2="5.5" y2="277.48" stroke="#505050" stroke-width="1.2" />
<rect x="19" y="265.48" width="15.3" height="12" fill="#bcbcbc" stroke="none" stroke-width="1" />
<line x1="19" y1="265.98" x2="34.3" y2="265.98" stroke="#555555" stroke-width="1" />
<line x1="19.5" y1="265.48" x2="19.5" y2="277.48" stroke="#555555" stroke-width="1" />
<line x1="19" y1="276.98" x2="34.3" y2="276.98" stroke="#e8e8e8" stroke-width="1" />
<line x1="33.8" y1="265.48" x2="33.8" y2="277.48" stroke="#e8e8e8" stroke-width="1" />
<text x="22" y="274.28000000000003" font-size="7.8" font-weight="normal" fill="#1e1e1e" textLength="8.1" lengthAdjust="spacingAndGlyphs" stroke="#1e1e1e" stroke-width="0.3">dg</text>
<rect x="35" y="265.48" width="34.8" height="12" fill="#bcbcbc" stroke="none" stroke-width="1" />
<line x1="35" y1="265.98" x2="69.8" y2="265.98" stroke="#555555" stroke-width="1" />
<line x1="35.5" y1="265.48" x2="35.5" y2="277.48" stroke="#555555" stroke-width="1" />
<line x1="35" y1="276.98" x2="69.8" y2="276.98" stroke="#e8e8e8" stroke-width="1" />
<line x1="69.3" y1="265.48" x2="69.3" y2="277.48" stroke="#e8e8e8" stroke-width="1" />
<text x="37.7" y="274.28000000000003" font-size="7.8" font-weight="normal" fill="#1e1e1e" textLength="23.0" lengthAdjust="spacingAndGlyphs" stroke="#1e1e1e" stroke-width="0.3">OD_25</text>
<rect x="5" y="281.70000000000005" width="12.5" height="11.5" fill="#b0b0b0" stroke="#707070" stroke-width="1" />
<line x1="5.5" y1="281.20000000000005" x2="5.5" y2="293.20000000000005" stroke="#505050" stroke-width="1.2" />
<rect x="19" y="281.20000000000005" width="15.3" height="12" fill="#bcbcbc" stroke="none" stroke-width="1" />
<line x1="19" y1="281.70000000000005" x2="34.3" y2="281.70000000000005" stroke="#555555" stroke-width="1" />
<line x1="19.5" y1="281.20000000000005" x2="19.5" y2="293.20000000000005" stroke="#555555" stroke-width="1" />
<line x1="19" y1="292.70000000000005" x2="34.3" y2="292.70000000000005" stroke="#e8e8e8" stroke-width="1" />
<line x1="33.8" y1="281.20000000000005" x2="33.8" y2="293.20000000000005" stroke="#e8e8e8" stroke-width="1" />
<text x="22" y="290.00000000000006" font-size="7.8" font-weight="normal" fill="#1e1e1e" textLength="8.1" lengthAdjust="spacingAndGlyphs" stroke="#1e1e1e" stroke-width="0.3">dg</text>
<rect x="35" y="281.20000000000005" width="34.8" height="12" fill="#bcbcbc" stroke="none" stroke-width="1" />
<line x1="35" y1="281.70000000000005" x2="69.8" y2="281.70000000000005" stroke="#555555" stroke-width="1" />
<line x1="35.5" y1="281.20000000000005" x2="35.5" y2="293.20000000000005" stroke="#555555" stroke-width="1" />
<line x1="35" y1="292.70000000000005" x2="69.8" y2="292.70000000000005" stroke="#e8e8e8" stroke-width="1" />
<line x1="69.3" y1="281.20000000000005" x2="69.3" y2="293.20000000000005" stroke="#e8e8e8" stroke-width="1" />
<text x="37.7" y="290.00000000000006" font-size="7.8" font-weight="normal" fill="#1e1e1e" textLength="23.0" lengthAdjust="spacingAndGlyphs" stroke="#1e1e1e" stroke-width="0.3">OD_33</text>
<rect x="5" y="297.42" width="12.5" height="11.5" fill="#b0b0b0" stroke="#707070" stroke-width="1" />
<line x1="5.5" y1="296.92" x2="5.5" y2="308.92" stroke="#505050" stroke-width="1.2" />
<rect x="19" y="296.92" width="15.3" height="12" fill="#bcbcbc" stroke="none" stroke-width="1" />
<line x1="19" y1="297.42" x2="34.3" y2="297.42" stroke="#555555" stroke-width="1" />
<line x1="19.5" y1="296.92" x2="19.5" y2="308.92" stroke="#555555" stroke-width="1" />
<line x1="19" y1="308.42" x2="34.3" y2="308.42" stroke="#e8e8e8" stroke-width="1" />
<line x1="33.8" y1="296.92" x2="33.8" y2="308.92" stroke="#e8e8e8" stroke-width="1" />
<text x="22" y="305.72" font-size="7.8" font-weight="normal" fill="#1e1e1e" textLength="8.1" lengthAdjust="spacingAndGlyphs" stroke="#1e1e1e" stroke-width="0.3">dg</text>
<rect x="35" y="296.92" width="34.8" height="12" fill="#bcbcbc" stroke="none" stroke-width="1" />
<line x1="35" y1="297.42" x2="69.8" y2="297.42" stroke="#555555" stroke-width="1" />
<line x1="35.5" y1="296.92" x2="35.5" y2="308.92" stroke="#555555" stroke-width="1" />
<line x1="35" y1="308.42" x2="69.8" y2="308.42" stroke="#e8e8e8" stroke-width="1" />
<line x1="69.3" y1="296.92" x2="69.3" y2="308.92" stroke="#e8e8e8" stroke-width="1" />
<text x="37.7" y="305.72" font-size="7.8" font-weight="normal" fill="#1e1e1e" textLength="33.0" lengthAdjust="spacingAndGlyphs" stroke="#1e1e1e" stroke-width="0.3">DD_DECA</text>
<rect x="5" y="313.14" width="12.5" height="11.5" fill="#6464d4" stroke="#1c1cc0" stroke-width="1.6" />
<rect x="19" y="312.64" width="15.3" height="12" fill="#bcbcbc" stroke="none" stroke-width="1" />
<line x1="19" y1="313.14" x2="34.3" y2="313.14" stroke="#555555" stroke-width="1" />
<line x1="19.5" y1="312.64" x2="19.5" y2="324.64" stroke="#555555" stroke-width="1" />
<line x1="19" y1="324.14" x2="34.3" y2="324.14" stroke="#e8e8e8" stroke-width="1" />
<line x1="33.8" y1="312.64" x2="33.8" y2="324.64" stroke="#e8e8e8" stroke-width="1" />
<text x="22" y="321.44" font-size="7.8" font-weight="normal" fill="#1e1e1e" textLength="8.1" lengthAdjust="spacingAndGlyphs" stroke="#1e1e1e" stroke-width="0.3">dg</text>
<rect x="35" y="312.64" width="34.8" height="12" fill="#bcbcbc" stroke="none" stroke-width="1" />
<line x1="35" y1="313.14" x2="69.8" y2="313.14" stroke="#555555" stroke-width="1" />
<line x1="35.5" y1="312.64" x2="35.5" y2="324.64" stroke="#555555" stroke-width="1" />
<line x1="35" y1="324.14" x2="69.8" y2="324.14" stroke="#e8e8e8" stroke-width="1" />
<line x1="69.3" y1="312.64" x2="69.3" y2="324.64" stroke="#e8e8e8" stroke-width="1" />
<text x="37.7" y="321.44" font-size="7.8" font-weight="normal" fill="#1e1e1e" textLength="10.4" lengthAdjust="spacingAndGlyphs" stroke="#1e1e1e" stroke-width="0.3">PO</text>
<rect x="5" y="328.86" width="12.5" height="11.5" fill="#a0b4a4" stroke="#40b080" stroke-width="1.6" />
<rect x="19" y="328.36" width="15.3" height="12" fill="#bcbcbc" stroke="none" stroke-width="1" />
<line x1="19" y1="328.86" x2="34.3" y2="328.86" stroke="#555555" stroke-width="1" />
<line x1="19.5" y1="328.36" x2="19.5" y2="340.36" stroke="#555555" stroke-width="1" />
<line x1="19" y1="339.86" x2="34.3" y2="339.86" stroke="#e8e8e8" stroke-width="1" />
<line x1="33.8" y1="328.36" x2="33.8" y2="340.36" stroke="#e8e8e8" stroke-width="1" />
<text x="22" y="337.16" font-size="7.8" font-weight="normal" fill="#1e1e1e" textLength="8.1" lengthAdjust="spacingAndGlyphs" stroke="#1e1e1e" stroke-width="0.3">dg</text>
<rect x="35" y="328.36" width="34.8" height="12" fill="#bcbcbc" stroke="none" stroke-width="1" />
<line x1="35" y1="328.86" x2="69.8" y2="328.86" stroke="#555555" stroke-width="1" />
<line x1="35.5" y1="328.36" x2="35.5" y2="340.36" stroke="#555555" stroke-width="1" />
<line x1="35" y1="339.86" x2="69.8" y2="339.86" stroke="#e8e8e8" stroke-width="1" />
<line x1="69.3" y1="328.36" x2="69.3" y2="340.36" stroke="#e8e8e8" stroke-width="1" />
<text x="37.7" y="337.16" font-size="7.8" font-weight="normal" fill="#1e1e1e" textLength="22.0" lengthAdjust="spacingAndGlyphs" stroke="#1e1e1e" stroke-width="0.3">VTH_N</text>
<rect x="5" y="344.58000000000004" width="12.5" height="11.5" fill="#b4b4a0" stroke="#a0a060" stroke-width="1.6" />
<rect x="19" y="344.08000000000004" width="15.3" height="12" fill="#bcbcbc" stroke="none" stroke-width="1" />
<line x1="19" y1="344.58000000000004" x2="34.3" y2="344.58000000000004" stroke="#555555" stroke-width="1" />
<line x1="19.5" y1="344.08000000000004" x2="19.5" y2="356.08000000000004" stroke="#555555" stroke-width="1" />
<line x1="19" y1="355.58000000000004" x2="34.3" y2="355.58000000000004" stroke="#e8e8e8" stroke-width="1" />
<line x1="33.8" y1="344.08000000000004" x2="33.8" y2="356.08000000000004" stroke="#e8e8e8" stroke-width="1" />
<text x="22" y="352.88000000000005" font-size="7.8" font-weight="normal" fill="#1e1e1e" textLength="8.1" lengthAdjust="spacingAndGlyphs" stroke="#1e1e1e" stroke-width="0.3">dg</text>
<rect x="35" y="344.08000000000004" width="34.8" height="12" fill="#bcbcbc" stroke="none" stroke-width="1" />
<line x1="35" y1="344.58000000000004" x2="69.8" y2="344.58000000000004" stroke="#555555" stroke-width="1" />
<line x1="35.5" y1="344.08000000000004" x2="35.5" y2="356.08000000000004" stroke="#555555" stroke-width="1" />
<line x1="35" y1="355.58000000000004" x2="69.8" y2="355.58000000000004" stroke="#e8e8e8" stroke-width="1" />
<line x1="69.3" y1="344.08000000000004" x2="69.3" y2="356.08000000000004" stroke="#e8e8e8" stroke-width="1" />
<text x="37.7" y="352.88000000000005" font-size="7.8" font-weight="normal" fill="#1e1e1e" textLength="22.0" lengthAdjust="spacingAndGlyphs" stroke="#1e1e1e" stroke-width="0.3">VTH_P</text>
<rect x="5" y="360.3" width="12.5" height="11.5" fill="#b4b4a8" stroke="#202094" stroke-width="1.6" />
<rect x="19" y="359.8" width="15.3" height="12" fill="#bcbcbc" stroke="none" stroke-width="1" />
<line x1="19" y1="360.3" x2="34.3" y2="360.3" stroke="#555555" stroke-width="1" />
<line x1="19.5" y1="359.8" x2="19.5" y2="371.8" stroke="#555555" stroke-width="1" />
<line x1="19" y1="371.3" x2="34.3" y2="371.3" stroke="#e8e8e8" stroke-width="1" />
<line x1="33.8" y1="359.8" x2="33.8" y2="371.8" stroke="#e8e8e8" stroke-width="1" />
<text x="22" y="368.6" font-size="7.8" font-weight="normal" fill="#1e1e1e" textLength="8.1" lengthAdjust="spacingAndGlyphs" stroke="#1e1e1e" stroke-width="0.3">dg</text>
<rect x="35" y="359.8" width="34.8" height="12" fill="#bcbcbc" stroke="none" stroke-width="1" />
<line x1="35" y1="360.3" x2="69.8" y2="360.3" stroke="#555555" stroke-width="1" />
<line x1="35.5" y1="359.8" x2="35.5" y2="371.8" stroke="#555555" stroke-width="1" />
<line x1="35" y1="371.3" x2="69.8" y2="371.3" stroke="#e8e8e8" stroke-width="1" />
<line x1="69.3" y1="359.8" x2="69.3" y2="371.8" stroke="#e8e8e8" stroke-width="1" />
<text x="37.7" y="368.6" font-size="7.8" font-weight="normal" fill="#1e1e1e" textLength="21.0" lengthAdjust="spacingAndGlyphs" stroke="#1e1e1e" stroke-width="0.3">VTL_N</text>
<rect x="5" y="376.02" width="12.5" height="11.5" fill="#c0c0c8" stroke="#707070" stroke-width="1" />
<line x1="5.5" y1="375.52" x2="5.5" y2="387.52" stroke="#505050" stroke-width="1.2" />
<rect x="19" y="375.52" width="15.3" height="12" fill="#bcbcbc" stroke="none" stroke-width="1" />
<line x1="19" y1="376.02" x2="34.3" y2="376.02" stroke="#555555" stroke-width="1" />
<line x1="19.5" y1="375.52" x2="19.5" y2="387.52" stroke="#555555" stroke-width="1" />
<line x1="19" y1="387.02" x2="34.3" y2="387.02" stroke="#e8e8e8" stroke-width="1" />
<line x1="33.8" y1="375.52" x2="33.8" y2="387.52" stroke="#e8e8e8" stroke-width="1" />
<text x="22" y="384.32" font-size="7.8" font-weight="normal" fill="#1e1e1e" textLength="8.1" lengthAdjust="spacingAndGlyphs" stroke="#1e1e1e" stroke-width="0.3">dg</text>
<rect x="35" y="375.52" width="34.8" height="12" fill="#bcbcbc" stroke="none" stroke-width="1" />
<line x1="35" y1="376.02" x2="69.8" y2="376.02" stroke="#555555" stroke-width="1" />
<line x1="35.5" y1="375.52" x2="35.5" y2="387.52" stroke="#555555" stroke-width="1" />
<line x1="35" y1="387.02" x2="69.8" y2="387.02" stroke="#e8e8e8" stroke-width="1" />
<line x1="69.3" y1="375.52" x2="69.3" y2="387.52" stroke="#e8e8e8" stroke-width="1" />
<text x="37.7" y="384.32" font-size="7.8" font-weight="normal" fill="#1e1e1e" textLength="21.0" lengthAdjust="spacingAndGlyphs" stroke="#1e1e1e" stroke-width="0.3">VTL_P</text>
<rect x="5" y="391.74" width="12.5" height="11.5" fill="#b0b0b0" stroke="#808080" stroke-width="1" />
<line x1="5.5" y1="391.24" x2="5.5" y2="403.24" stroke="#505050" stroke-width="1.2" />
<rect x="19" y="391.24" width="15.3" height="12" fill="#bcbcbc" stroke="none" stroke-width="1" />
<line x1="19" y1="391.74" x2="34.3" y2="391.74" stroke="#555555" stroke-width="1" />
<line x1="19.5" y1="391.24" x2="19.5" y2="403.24" stroke="#555555" stroke-width="1" />
<line x1="19" y1="402.74" x2="34.3" y2="402.74" stroke="#e8e8e8" stroke-width="1" />
<line x1="33.8" y1="391.24" x2="33.8" y2="403.24" stroke="#e8e8e8" stroke-width="1" />
<text x="22" y="400.04" font-size="7.8" font-weight="normal" fill="#1e1e1e" textLength="8.1" lengthAdjust="spacingAndGlyphs" stroke="#1e1e1e" stroke-width="0.3">dg</text>
<rect x="35" y="391.24" width="34.8" height="12" fill="#bcbcbc" stroke="none" stroke-width="1" />
<line x1="35" y1="391.74" x2="69.8" y2="391.74" stroke="#555555" stroke-width="1" />
<line x1="35.5" y1="391.24" x2="35.5" y2="403.24" stroke="#555555" stroke-width="1" />
<line x1="35" y1="402.74" x2="69.8" y2="402.74" stroke="#e8e8e8" stroke-width="1" />
<line x1="69.3" y1="391.24" x2="69.3" y2="403.24" stroke="#e8e8e8" stroke-width="1" />
<text x="37.7" y="400.04" font-size="7.8" font-weight="normal" fill="#1e1e1e" textLength="20.0" lengthAdjust="spacingAndGlyphs" stroke="#1e1e1e" stroke-width="0.3">NT_N</text>
<rect x="5" y="407.46000000000004" width="12.5" height="11.5" fill="#c4a4c4" stroke="#c070c0" stroke-width="1.6" />
<rect x="19" y="406.96000000000004" width="15.3" height="12" fill="#bcbcbc" stroke="none" stroke-width="1" />
<line x1="19" y1="407.46000000000004" x2="34.3" y2="407.46000000000004" stroke="#555555" stroke-width="1" />
<line x1="19.5" y1="406.96000000000004" x2="19.5" y2="418.96000000000004" stroke="#555555" stroke-width="1" />
<line x1="19" y1="418.46000000000004" x2="34.3" y2="418.46000000000004" stroke="#e8e8e8" stroke-width="1" />
<line x1="33.8" y1="406.96000000000004" x2="33.8" y2="418.96000000000004" stroke="#e8e8e8" stroke-width="1" />
<text x="22" y="415.76000000000005" font-size="7.8" font-weight="normal" fill="#1e1e1e" textLength="8.1" lengthAdjust="spacingAndGlyphs" stroke="#1e1e1e" stroke-width="0.3">dg</text>
<rect x="35" y="406.96000000000004" width="34.8" height="12" fill="#bcbcbc" stroke="none" stroke-width="1" />
<line x1="35" y1="407.46000000000004" x2="69.8" y2="407.46000000000004" stroke="#555555" stroke-width="1" />
<line x1="35.5" y1="406.96000000000004" x2="35.5" y2="418.96000000000004" stroke="#555555" stroke-width="1" />
<line x1="35" y1="418.46000000000004" x2="69.8" y2="418.46000000000004" stroke="#e8e8e8" stroke-width="1" />
<line x1="69.3" y1="406.96000000000004" x2="69.3" y2="418.96000000000004" stroke="#e8e8e8" stroke-width="1" />
<text x="37.7" y="415.76000000000005" font-size="7.8" font-weight="normal" fill="#1e1e1e" textLength="10.4" lengthAdjust="spacingAndGlyphs" stroke="#1e1e1e" stroke-width="0.3">PP</text>
<rect x="5" y="423.18" width="12.5" height="11.5" fill="#b0b0b8" stroke="#808090" stroke-width="1" />
<line x1="5.5" y1="422.68" x2="5.5" y2="434.68" stroke="#505050" stroke-width="1.2" />
<rect x="19" y="422.68" width="15.3" height="12" fill="#bcbcbc" stroke="none" stroke-width="1" />
<line x1="19" y1="423.18" x2="34.3" y2="423.18" stroke="#555555" stroke-width="1" />
<line x1="19.5" y1="422.68" x2="19.5" y2="434.68" stroke="#555555" stroke-width="1" />
<line x1="19" y1="434.18" x2="34.3" y2="434.18" stroke="#e8e8e8" stroke-width="1" />
<line x1="33.8" y1="422.68" x2="33.8" y2="434.68" stroke="#e8e8e8" stroke-width="1" />
<text x="22" y="431.48" font-size="7.8" font-weight="normal" fill="#1e1e1e" textLength="8.1" lengthAdjust="spacingAndGlyphs" stroke="#1e1e1e" stroke-width="0.3">dg</text>
<rect x="35" y="422.68" width="34.8" height="12" fill="#bcbcbc" stroke="none" stroke-width="1" />
<line x1="35" y1="423.18" x2="69.8" y2="423.18" stroke="#555555" stroke-width="1" />
<line x1="35.5" y1="422.68" x2="35.5" y2="434.68" stroke="#555555" stroke-width="1" />
<line x1="35" y1="434.18" x2="69.8" y2="434.18" stroke="#e8e8e8" stroke-width="1" />
<line x1="69.3" y1="422.68" x2="69.3" y2="434.68" stroke="#e8e8e8" stroke-width="1" />
<text x="37.7" y="431.48" font-size="7.8" font-weight="normal" fill="#1e1e1e" textLength="10.4" lengthAdjust="spacingAndGlyphs" stroke="#1e1e1e" stroke-width="0.3">NP</text>
<rect x="3.5" y="122" width="68" height="15.5" fill="none" stroke="#d05868" stroke-width="1.8" />
<line x1="4" y1="138.6" x2="72" y2="138.6" stroke="#d8c878" stroke-width="1.2" />
<line x1="1" y1="449.5" x2="85" y2="449.5" stroke="#808080" stroke-width="1" />
<rect x="3.8" y="453.6" width="79" height="14" fill="#ffffff" stroke="none" stroke-width="1" />
<line x1="3.8" y1="454.1" x2="82.8" y2="454.1" stroke="#606060" stroke-width="1" />
<line x1="4.3" y1="453.6" x2="4.3" y2="467.6" stroke="#606060" stroke-width="1" />
<line x1="3.8" y1="467.1" x2="82.8" y2="467.1" stroke="#f0f0f0" stroke-width="1" />
<line x1="82.3" y1="453.6" x2="82.3" y2="467.6" stroke="#f0f0f0" stroke-width="1" />
<rect x="72.2" y="455" width="10" height="11" fill="#cfcfcf" stroke="#a0a0a0" stroke-width="0.8" />
<path d="M73.5 456.5 l7.5 8 M81 456.5 l-7.5 8" stroke="#b0b0b0" stroke-width="0.8"/>
<line x1="7" y1="457" x2="7" y2="465" stroke="#222" stroke-width="1" />
<rect x="86" y="83" width="662" height="387" fill="#9a9a9a" stroke="none" stroke-width="1" />
<line x1="85.3" y1="83" x2="85.3" y2="469" stroke="#f8f8f8" stroke-width="1.4" />
<line x1="86.5" y1="84" x2="86.5" y2="469" stroke="#303030" stroke-width="1" />
<g clip-path="url(#cv)">
<rect x="87" y="85" width="659" height="383" fill="#000000" stroke="none" stroke-width="1" />
<rect x="87" y="89.0" width="659" height="20.400000000000006" fill="#161b18" stroke="none" stroke-width="1" />
<rect x="87" y="149.3" width="659" height="39.39999999999998" fill="#161b18" stroke="none" stroke-width="1" />
<rect x="87" y="229" width="659" height="39.80000000000001" fill="#161b18" stroke="none" stroke-width="1" />
<rect x="87" y="309.1" width="659" height="39.799999999999955" fill="#161b18" stroke="none" stroke-width="1" />
<rect x="321" y="189.5" width="154" height="119" fill="#000" stroke="none" stroke-width="1" />
<rect x="361" y="229" width="16.5" height="39.5" fill="#161b18" stroke="none" stroke-width="1" />
<rect x="87" y="389" width="39.6" height="41" fill="#161b18" stroke="none" stroke-width="1" />
<rect x="87" y="85" width="659" height="383" fill="url(#dots)" stroke="none" stroke-width="1" />
<line x1="87" y1="89.0" x2="746" y2="89.0" stroke="#3e7863" stroke-width="1.3" />
<line x1="87" y1="109.4" x2="746" y2="109.4" stroke="#3e7863" stroke-width="1.3" />
<line x1="87" y1="149.3" x2="746" y2="149.3" stroke="#3e7863" stroke-width="1.3" />
<line x1="87" y1="188.7" x2="746" y2="188.7" stroke="#3e7863" stroke-width="1.3" />
<line x1="87" y1="169.2" x2="746" y2="169.2" stroke="#3e7863" stroke-width="1.3" />
<line x1="87" y1="229" x2="321" y2="229" stroke="#3e7863" stroke-width="1.3" />
<line x1="475" y1="229" x2="746" y2="229" stroke="#3e7863" stroke-width="1.3" />
<line x1="87" y1="268.8" x2="321" y2="268.8" stroke="#3e7863" stroke-width="1.3" />
<line x1="475" y1="268.8" x2="746" y2="268.8" stroke="#3e7863" stroke-width="1.3" />
<line x1="87" y1="248.6" x2="321" y2="248.6" stroke="#3e7863" stroke-width="1.3" />
<line x1="475" y1="248.6" x2="746" y2="248.6" stroke="#3e7863" stroke-width="1.3" />
<line x1="87" y1="309.1" x2="746" y2="309.1" stroke="#3e7863" stroke-width="1.3" />
<line x1="87" y1="348.9" x2="746" y2="348.9" stroke="#3e7863" stroke-width="1.3" />
<line x1="618" y1="149.3" x2="618" y2="188.7" stroke="#3e7863" stroke-width="1.2" />
<line x1="543.6" y1="149.3" x2="543.6" y2="188.7" stroke="#3e7863" stroke-width="1.0" />
<line x1="304" y1="229" x2="304" y2="268.8" stroke="#3e7863" stroke-width="1.0" />
<rect x="87" y="389.5" width="39.6" height="40.5" fill="none" stroke="#3e7863" stroke-width="1.2" />
<path d="M87 311.5 L91.3 325 Q92 329 91.3 333 L87 347.5" fill="none" stroke="#40c8c0" stroke-width="1.6"/>
<rect x="209.2" y="146.6" width="39.70000000000002" height="323.4" fill="url(#stg)" stroke="none" stroke-width="1" />
<line x1="209.2" y1="146.6" x2="209.2" y2="470" stroke="#9a9e70" stroke-width="1.2" />
<line x1="248.9" y1="146.6" x2="248.9" y2="470" stroke="#9a9e70" stroke-width="1.2" />
<line x1="209.2" y1="146.6" x2="248.9" y2="146.6" stroke="#9a9e70" stroke-width="1.2" />
<line x1="229.05" y1="146.6" x2="229.05" y2="470" stroke="#9a9e70" stroke-width="1.2" />
<rect x="320.7" y="80" width="40.30000000000001" height="206" fill="url(#stg)" stroke="none" stroke-width="1" />
<line x1="320.7" y1="80" x2="320.7" y2="286" stroke="#9a9e70" stroke-width="1.2" />
<line x1="361" y1="80" x2="361" y2="286" stroke="#9a9e70" stroke-width="1.2" />
<line x1="320.7" y1="286" x2="361" y2="286" stroke="#9a9e70" stroke-width="1.2" />
<line x1="340.85" y1="80" x2="340.85" y2="268.5" stroke="#9a9e70" stroke-width="1.2" />
<line x1="320.7" y1="212" x2="361" y2="212" stroke="#9a9e70" stroke-width="1.5" />
<rect x="401" y="229" width="40" height="241" fill="url(#stg)" stroke="none" stroke-width="1" />
<line x1="401" y1="229" x2="401" y2="470" stroke="#9a9e70" stroke-width="1.2" />
<line x1="441" y1="229" x2="441" y2="470" stroke="#9a9e70" stroke-width="1.2" />
<line x1="401" y1="229" x2="441" y2="229" stroke="#9a9e70" stroke-width="1.2" />
<line x1="421.0" y1="229" x2="421.0" y2="470" stroke="#9a9e70" stroke-width="1.2" />
<line x1="401" y1="248.6" x2="418" y2="248.6" stroke="#9a9e70" stroke-width="1.5" />
<rect x="561" y="132.3" width="40.299999999999955" height="337.7" fill="url(#stg)" stroke="none" stroke-width="1" />
<line x1="561" y1="132.3" x2="561" y2="470" stroke="#9a9e70" stroke-width="1.2" />
<line x1="601.3" y1="132.3" x2="601.3" y2="470" stroke="#9a9e70" stroke-width="1.2" />
<line x1="561" y1="132.3" x2="601.3" y2="132.3" stroke="#9a9e70" stroke-width="1.2" />
<line x1="561" y1="205" x2="601.3" y2="205" stroke="#9a9e70" stroke-width="1.5" />
<line x1="581" y1="189" x2="581" y2="470" stroke="#9a9e70" stroke-width="1.5" />
<rect x="321" y="229.5" width="40" height="39" fill="#000" stroke="none" stroke-width="1" />
<rect x="321" y="229.5" width="40" height="39" fill="url(#hl)" stroke="none" stroke-width="1" />
<rect x="561.8" y="149.3" width="39" height="40" fill="#000" stroke="none" stroke-width="1" />
<rect x="561.8" y="149.3" width="39" height="40" fill="url(#hl2)"/>
<line x1="581" y1="149.3" x2="581" y2="189.3" stroke="#5a6634" stroke-width="1" />
<line x1="340.85" y1="229" x2="340.85" y2="268.5" stroke="#5a6634" stroke-width="1" />
<line x1="87" y1="329" x2="746" y2="329" stroke="#6a3ad0" stroke-width="1.1" />
<line x1="621" y1="329" x2="621" y2="468" stroke="#6a3ad0" stroke-width="1.1" />
<rect x="320.7" y="188.8" width="154.7" height="120.5" fill="none" stroke="#cc1e28" stroke-width="2" />
<line x1="320.7" y1="228.9" x2="418.4" y2="228.9" stroke="#cc1e28" stroke-width="2" />
<line x1="320.7" y1="268.5" x2="418.4" y2="268.5" stroke="#cc1e28" stroke-width="2" />
<line x1="361.2" y1="228.9" x2="361.2" y2="268.5" stroke="#cc1e28" stroke-width="2" />
<line x1="377.5" y1="228.9" x2="377.5" y2="268.5" stroke="#cc1e28" stroke-width="2" />
<line x1="418.4" y1="228.9" x2="418.4" y2="268.5" stroke="#cc1e28" stroke-width="2" />
<path d="M589.5 304 L610 359 L630.3 304" fill="none" stroke="#3cc8c8" stroke-width="1.9"/>
<path d="M640.8 303.6 V358.7 H657.3 C670.8 358.7 677.8 350 677.8 336 V326 C677.8 312 670.8 303.6 657.3 303.6 Z" fill="none" stroke="#3cc8c8" stroke-width="1.9"/>
<path d="M693.4 303.6 V358.7 H709.9 C723.4 358.7 730.4 350 730.4 336 V326 C730.4 312 723.4 303.6 709.9 303.6 Z" fill="none" stroke="#3cc8c8" stroke-width="1.9"/>
<path d="M657 329 h6 M660 326 v6" stroke="#9ad" stroke-width="1"/>
<path d="M410.5 210.5 v10 l2.5 -2.5 l2 4 l1.5 -0.8 l-2 -4 h3.5 z" fill="#000" stroke="#d8d8d8" stroke-width="0.9"/>
<rect x="422" y="222" width="143" height="71" fill="#f2f000" stroke="#303030" stroke-width="1" />
<text x="424.5" y="230.3" font-size="9.0" font-weight="normal" fill="#2a2a10" textLength="82.5" lengthAdjust="spacingAndGlyphs" stroke="#2a2a10" stroke-width="0.25">M3.line_end_violation</text>
<text x="424.5" y="240.22" font-size="9.0" font-weight="normal" fill="#2a2a10" textLength="138.5" lengthAdjust="spacingAndGlyphs" stroke="#2a2a10" stroke-width="0.25">Space at Metalx in a dense-line-end</text>
<text x="424.5" y="250.14000000000001" font-size="9.0" font-weight="normal" fill="#2a2a10" textLength="132.9" lengthAdjust="spacingAndGlyphs" stroke="#2a2a10" stroke-width="0.25">configuration: If Metalx has parallel</text>
<text x="424.5" y="260.06" font-size="9.0" font-weight="normal" fill="#2a2a10" textLength="119.1" lengthAdjust="spacingAndGlyphs" stroke="#2a2a10" stroke-width="0.25">run length with opposite Metalx</text>
<text x="424.5" y="269.98" font-size="9.0" font-weight="normal" fill="#2a2a10" textLength="128.8" lengthAdjust="spacingAndGlyphs" stroke="#2a2a10" stroke-width="0.25">along 2 adjacent edges of Metalx,</text>
<text x="424.5" y="279.90000000000003" font-size="9.0" font-weight="normal" fill="#2a2a10" textLength="130.1" lengthAdjust="spacingAndGlyphs" stroke="#2a2a10" stroke-width="0.25">then one of the space needs to be</text>
<text x="424.5" y="289.82" font-size="9.0" font-weight="normal" fill="#2a2a10" textLength="27.1" lengthAdjust="spacingAndGlyphs" stroke="#2a2a10" stroke-width="0.25">&gt;= 0.20</text>
</g>
<text x="4.4" y="481.1" font-size="9.4" font-weight="bold" fill="#1e1e1e" textLength="15.4" lengthAdjust="spacingAndGlyphs" stroke="#1e1e1e" stroke-width="0.22">Tcl:</text>
<rect x="22" y="470.6" width="620.5" height="15" fill="#ffffff" stroke="none" stroke-width="1" />
<line x1="22" y1="471.1" x2="642.5" y2="471.1" stroke="#505050" stroke-width="1" />
<line x1="22.5" y1="470.6" x2="22.5" y2="485.6" stroke="#505050" stroke-width="1" />
<line x1="22" y1="485.1" x2="642.5" y2="485.1" stroke="#f0f0f0" stroke-width="1" />
<line x1="642.0" y1="470.6" x2="642.0" y2="485.6" stroke="#f0f0f0" stroke-width="1" />
<rect x="643" y="469.5" width="88" height="17" fill="#c8c8c8" stroke="none" stroke-width="1" />
<line x1="643" y1="470.0" x2="731" y2="470.0" stroke="#909090" stroke-width="1" />
<line x1="643.5" y1="469.5" x2="643.5" y2="486.5" stroke="#909090" stroke-width="1" />
<line x1="643" y1="486.0" x2="731" y2="486.0" stroke="#f0f0f0" stroke-width="1" />
<line x1="730.5" y1="469.5" x2="730.5" y2="486.5" stroke="#f0f0f0" stroke-width="1" />
<rect x="646.6" y="472" width="13" height="12" fill="#a8a8a8" stroke="#888" stroke-width="0.8" />
<rect x="661" y="472" width="13" height="12" fill="#bcbcbc" stroke="none" stroke-width="1" />
<line x1="661" y1="472.5" x2="674" y2="472.5" stroke="#555" stroke-width="1" />
<line x1="661.5" y1="472" x2="661.5" y2="484" stroke="#555" stroke-width="1" />
<line x1="661" y1="483.5" x2="674" y2="483.5" stroke="#e8e8e8" stroke-width="1" />
<line x1="673.5" y1="472" x2="673.5" y2="484" stroke="#e8e8e8" stroke-width="1" />
<text x="663.5" y="481.5" font-size="7.8" font-weight="normal" fill="#1e1e1e" textLength="8.0" lengthAdjust="spacingAndGlyphs" stroke="#1e1e1e" stroke-width="0.3">dg</text>
<rect x="677.4" y="472" width="34.4" height="12" fill="#ffffff" stroke="none" stroke-width="1" />
<line x1="677.4" y1="472.5" x2="711.8" y2="472.5" stroke="#777" stroke-width="1" />
<line x1="677.9" y1="472" x2="677.9" y2="484" stroke="#777" stroke-width="1" />
<line x1="677.4" y1="483.5" x2="711.8" y2="483.5" stroke="#f0f0f0" stroke-width="1" />
<line x1="711.3" y1="472" x2="711.3" y2="484" stroke="#f0f0f0" stroke-width="1" />
<text x="680.5" y="481.5" font-size="7.8" font-weight="normal" fill="#1e1e1e" textLength="10.5" lengthAdjust="spacingAndGlyphs" stroke="#1e1e1e" stroke-width="0.3">ref</text>
<rect x="714.8" y="472" width="14.6" height="12" fill="#b8b8b8" stroke="none" stroke-width="1" />
<path d="M734 480 q6 -9 12 0 z" fill="#c8c8c8" stroke="#333" stroke-width="1"/><rect x="734" y="481" width="12" height="2.5" fill="#111"/><path d="M735 477 h10" stroke="#333" stroke-width="0.8"/>
<rect x="3.7" y="487.7" width="730" height="14.5" fill="#d6d6d6" stroke="none" stroke-width="1" />
<line x1="3.7" y1="488.2" x2="733.7" y2="488.2" stroke="#606060" stroke-width="1" />
<line x1="4.2" y1="487.7" x2="4.2" y2="502.2" stroke="#606060" stroke-width="1" />
<line x1="3.7" y1="501.7" x2="733.7" y2="501.7" stroke="#f0f0f0" stroke-width="1" />
<line x1="733.2" y1="487.7" x2="733.2" y2="502.2" stroke="#f0f0f0" stroke-width="1" />
<text x="8" y="498" font-size="8.6" font-weight="normal" fill="#1e1e1e" textLength="297.0" lengthAdjust="spacingAndGlyphs" stroke="#1e1e1e" stroke-width="0.22">PreSelect Info:Instance I__1634+Lib(tsmc_45) Cell(INR2D4BWP) View(layout)</text>
<rect x="735.5" y="488.5" width="10.5" height="14.5" fill="#9a9a9a" stroke="#bcbcbc" stroke-width="0.8" />
<path d="M738 494 l5 -4 M738 498 l5 -4 M738 502 l5 -4" stroke="#f0f0f0" stroke-width="1.4"/><path d="M739 492 l4 -2 M739 496 l4 -2 M739 500 l4 -2" stroke="#303030" stroke-width="0.8"/>
</svg></body></html>
